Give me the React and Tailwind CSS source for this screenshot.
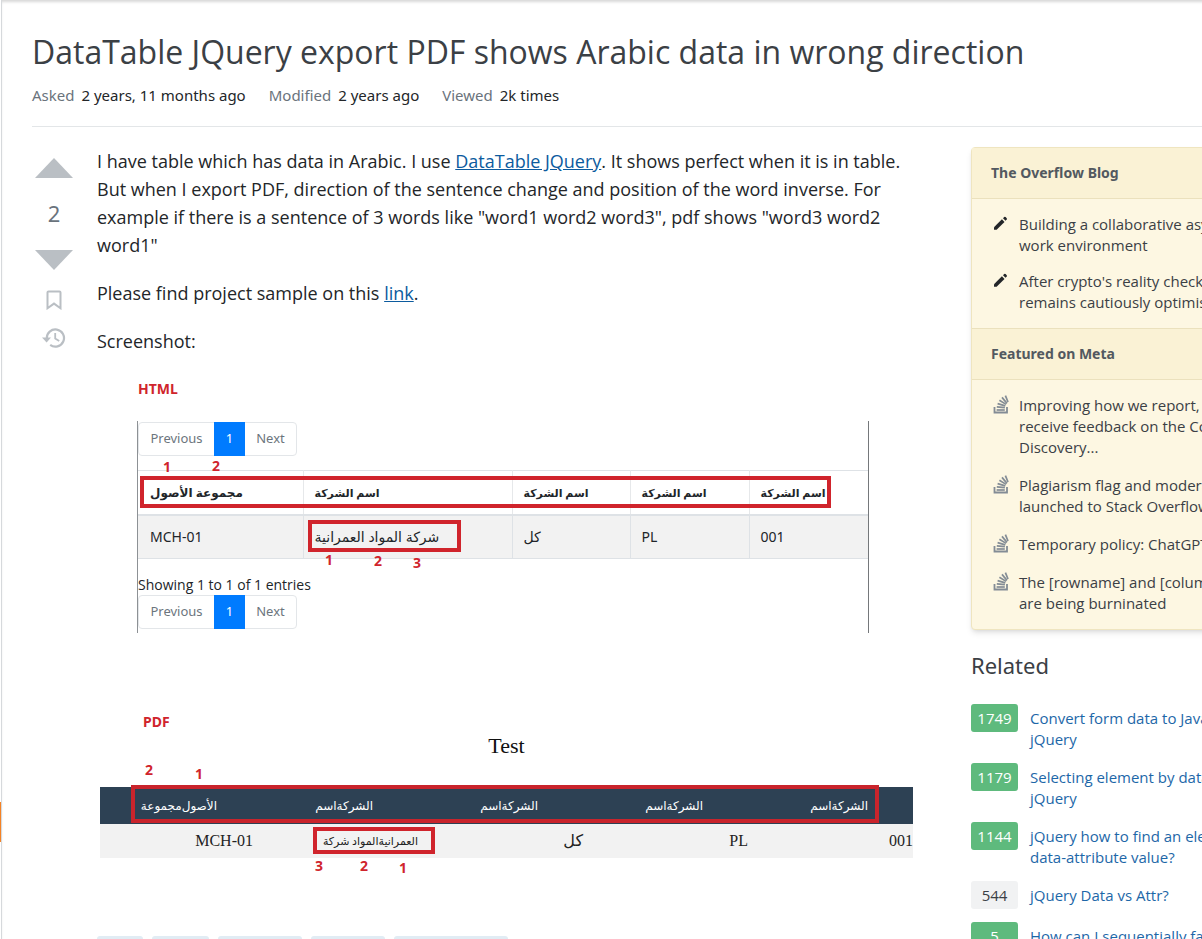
import React from 'react';

const blogPosts = [
  'Building a collaborative asynchronous\nwork environment',
  "After crypto's reality check, an investor\nremains cautiously optimistic"
];

const metaPosts = [
  'Improving how we report, handle and\nreceive feedback on the Collectives\nDiscovery...',
  'Plagiarism flag and moderator tooling has\nlaunched to Stack Overflow!',
  'Temporary policy: ChatGPT is banned',
  'The [rowname] and [columnname] tags\nare being burninated'
];

const related = [
  { score: 1749, title: 'Convert form data to JavaScript object with\njQuery', accepted: true },
  { score: 1179, title: 'Selecting element by data attribute with\njQuery', accepted: true },
  { score: 1144, title: 'jQuery how to find an element based on a\ndata-attribute value?', accepted: true },
  { score: 544, title: 'jQuery Data vs Attr?', accepted: false },
  { score: 5, title: 'How can I sequentially fade in elements', accepted: true }
];

const htmlColumns = [
  { title: 'مجموعة الأصول', value: 'MCH-01', width: 'w-[165px]' },
  { title: 'اسم الشركة', value: 'شركة المواد العمرانية', width: 'w-[209px]' },
  { title: 'اسم الشركة', value: 'كل', width: 'w-[118px]' },
  { title: 'اسم الشركة', value: 'PL', width: 'w-[119px]' },
  { title: 'اسم الشركة', value: '001', width: 'w-[119px]' }
];

const pdfColumns = [
  { title: 'الأصول\u200cمجموعة', value: 'MCH-01', width: 'w-[153px]', size: 'text-[16px]' },
  { title: 'الشركةاسم', value: 'العمرانيةالمواد شركة', width: 'w-[165px]', size: 'text-[11px]' },
  { title: 'الشركةاسم', value: 'كل', width: 'w-[165px]', size: 'text-[16px]' },
  { title: 'الشركةاسم', value: 'PL', width: 'w-[165px]', size: 'text-[16px]' },
  { title: 'الشركةاسم', value: '001', width: 'w-[165px]', size: 'text-[16px]' }
];

const tags = [
  { name: 'html', width: 'w-[46px]' },
  { name: 'jquery', width: 'w-[57px]' },
  { name: 'datatables', width: 'w-[84px]' },
  { name: 'pdfmake', width: 'w-[74px]' },
  { name: 'right-to-left', width: 'w-[114px]' }
];

function PencilIcon() {
  return (
    <svg width="15" height="15" viewBox="0 0 15 15" className="mt-[2px] shrink-0" fill="#232629" aria-hidden="true">
      <path d="M1 11.2 8.9 3.3l2.6 2.6L3.6 13.8H1z" />
      <path d="m10 2.3 1.2-1.2a1 1 0 0 1 1.4 0l1.1 1.1a1 1 0 0 1 0 1.4l-1.2 1.2z" />
    </svg>
  );
}

function StackIcon() {
  return (
    <svg width="17" height="19" viewBox="0 0 17 19" className="-mr-[2px] shrink-0" fill="none" stroke="#838c95" aria-hidden="true">
      <path d="M1.5 12v5.5h12.5V12" strokeWidth="1.8" />
      <g strokeWidth="1.7">
        <path d="M3.6 15h8.2" />
        <path d="m3.8 11.8 8.1.9" />
        <path d="m4.6 8.6 7.7 2.3" />
        <path d="m6.4 5.2 6.7 4.2" />
        <path d="m9 2.4 5 6" />
        <path d="m12.4.6 2.6 6.4" />
      </g>
    </svg>
  );
}

function Votes() {
  return (
    <div className="flex w-[44px] shrink-0 flex-col items-center pt-[11px]">
      <button type="button" aria-label="Up vote">
        <svg width="38" height="20" viewBox="0 0 38 20" fill="#babfc4"><path d="M0 20h38L19 0z" /></svg>
      </button>
      <div className="mt-[19px] mb-[21px] text-[22px] leading-[32px] text-[#6a737c]">2</div>
      <button type="button" aria-label="Down vote">
        <svg width="38" height="20" viewBox="0 0 38 20" fill="#babfc4"><path d="M0 0h38L19 20z" /></svg>
      </button>
      <button type="button" aria-label="Save" className="mt-5">
        <svg width="16" height="20" viewBox="0 0 16 20" fill="none" stroke="#babfc4" strokeWidth="2">
          <path d="M1.5 18.2V2.5a1 1 0 0 1 1-1h11a1 1 0 0 1 1 1v15.7L8 13.6z" />
        </svg>
      </button>
      <a href="#timeline" aria-label="Timeline" className="mt-[18px]">
        <svg width="24" height="20" viewBox="0 0 24 20" fill="none" stroke="#babfc4">
          <path d="M4.8 10.5a8.6 8.6 0 1 1 3.4 6.4" strokeWidth="2.2" />
          <path d="M0 9.6h9l-4.4 5z" fill="#babfc4" stroke="none" />
          <path d="M13.2 5v5.4l4 2.6" strokeWidth="1.8" />
        </svg>
      </a>
    </div>
  );
}

function Pagination() {
  return (
    <div className="flex h-[34px] w-[159px] rounded-[4px] border border-[#e3e6e9] text-[13px] text-[#6c757d]">
      <button type="button" className="w-[75px]">Previous</button>
      <button type="button" className="-my-px w-[31px] bg-[#007bff] text-white">1</button>
      <button type="button" className="flex-1">Next</button>
    </div>
  );
}

// red number written over the figure
function Mark({ children, className }) {
  return (
    <span className={`absolute text-[14px] leading-[16px] font-bold text-[#d0242c] ${className}`}>
      {children}
    </span>
  );
}

function HtmlFigure() {
  return (
    <div className="relative ml-[40px] w-[732px] border-x border-l-[#8d9195] border-r-[#75787b]">
      <div className="pt-px pb-[14px]">
        <Pagination />
      </div>
      <table className="w-full table-fixed border-collapse text-left text-[#212529]">
        <thead>
          <tr className="h-[44px] border-t border-b-2 border-[#dee2e6]">
            {htmlColumns.map((col, i) => (
              <th key={i} className={`${col.width} border-r border-[#e6e8ea] pt-[2px] pl-[11px] text-[11px] font-bold whitespace-nowrap first:pl-[12px] first:text-[12px] last:border-r-0`}>
                {col.title}
              </th>
            ))}
          </tr>
        </thead>
        <tbody>
          <tr className="h-[44px] border-b border-[#dee2e6] bg-[#f2f2f2]">
            {htmlColumns.map((col, i) => (
              <td key={i} className="border-r border-[#dee2e6] pl-[11px] text-[14px] whitespace-nowrap first:pl-[12px] last:border-r-0">
                {col.value}
              </td>
            ))}
          </tr>
        </tbody>
      </table>
      <p className="pt-[16px] font-['Open_Sans',sans-serif] text-[14px] leading-[20px] text-[#212529]">Showing 1 to 1 of 1 entries</p>
      <div className="pb-1">
        <Pagination />
      </div>

      <div className="absolute top-[55px] left-[2px] h-[32px] w-[691px] border-4 border-[#d0242c]" />
      <div className="absolute top-[99px] left-[170px] h-[32px] w-[153px] border-4 border-[#d0242c]" />
      <Mark className="top-[38px] left-[25px]">1</Mark>
      <Mark className="top-[37px] left-[74px]">2</Mark>
      <Mark className="top-[131px] left-[187px]">1</Mark>
      <Mark className="top-[132px] left-[236px]">2</Mark>
      <Mark className="top-[134px] left-[275px]">3</Mark>
    </div>
  );
}

function PdfFigure() {
  return (
    <div className="relative ml-[3px] w-[813px] pb-[78px] font-['Liberation_Serif','DejaVu_Sans',serif]">
      <div className="pb-[27px] text-center text-[22px] leading-[28px] text-[#111]">Test</div>
      <table className="w-full table-fixed border-collapse text-right whitespace-nowrap">
        <thead>
          <tr className="h-[37px] bg-[#2d4154] text-[12px] text-white">
            {pdfColumns.map((col, i) => (
              <th key={i} className={`${col.width} pr-[45px] font-normal first:pr-[36px]`}>
                {col.title}
              </th>
            ))}
          </tr>
        </thead>
        <tbody>
          <tr className="h-[34px] bg-[#f2f2f2] text-[#222]">
            {pdfColumns.map((col, i) => (
              <td key={i} className={col.size}>{col.value}</td>
            ))}
          </tr>
        </tbody>
      </table>

      <div className="absolute top-[53px] left-[31px] h-[38px] w-[748px] border-4 border-[#c9242c]" />
      <div className="absolute top-[95px] left-[213px] h-[27px] w-[122px] border-4 border-[#d0242c]" />
      <div className="font-['Noto_Sans',sans-serif]">
        <Mark className="top-[30px] left-[45px]">2</Mark>
        <Mark className="top-[34px] left-[95px]">1</Mark>
        <Mark className="top-[126px] left-[215px]">3</Mark>
        <Mark className="top-[126px] left-[260px]">2</Mark>
        <Mark className="top-[128px] left-[299px]">1</Mark>
      </div>
    </div>
  );
}

function WidgetHeader({ children }) {
  return (
    <h3 className="h-[51px] border-b border-[#ebe1bd] bg-[#faf2d5] pl-[19px] text-[14px] leading-[49px] font-bold text-[#525960]">
      {children}
    </h3>
  );
}

function WidgetList({ posts, icon, className }) {
  return (
    <ul className={`px-[21px] py-[15px] ${className}`}>
      {posts.map((post) => (
        <li key={post} className="flex gap-[11px]">
          {icon}
          <a href="#post" className="font-['Open_Sans',sans-serif] text-[15px] leading-[21px] whitespace-pre text-[#3b4045]">{post}</a>
        </li>
      ))}
    </ul>
  );
}

function Sidebar() {
  return (
    <aside className="w-[345px] shrink-0 pt-[20px]">
      <div className="rounded-[4px] border border-[#efe5c0] bg-[#fdf7e2] shadow-md">
        <WidgetHeader>The Overflow Blog</WidgetHeader>
        <WidgetList posts={blogPosts} icon={<PencilIcon />} className="space-y-[15px]" />
        <div className="border-t border-[#ebe1bd]">
          <WidgetHeader>Featured on Meta</WidgetHeader>
        </div>
        <WidgetList posts={metaPosts} icon={<StackIcon />} className="space-y-[17px]" />
      </div>

      <h2 className="mt-[20px] mb-[24px] text-[22px] leading-[30px] text-[#3b4045]">Related</h2>
      <ul className="space-y-[13px]">
        {related.map((q) => (
          <li key={q.title} className="flex items-start gap-[12px]">
            <span
              className={`w-[47px] shrink-0 rounded-[3px] text-center font-['Open_Sans',sans-serif] text-[15px] leading-[28px] ${
                q.accepted ? 'bg-[#5eba7d] text-white' : 'bg-[#f1f2f3] text-[#3b4045]'
              }`}
            >
              {q.score}
            </span>
            <a href="#question" className="pt-1 font-['Open_Sans',sans-serif] text-[15px] leading-[21px] whitespace-pre text-[#1d67a8]">{q.title}</a>
          </li>
        ))}
      </ul>
    </aside>
  );
}

export default function App() {
  return (
    <div className="flex h-screen overflow-hidden bg-white font-['Noto_Sans','DejaVu_Sans',sans-serif] text-[#232629]">
      <div className="w-px shrink-0 pt-[802px]">
        <div className="h-[40px] bg-[#f48225]" />
      </div>
      <div className="min-w-[1315px] flex-1 border-l border-[#d6d9dc] pl-[30px] shadow-[inset_0_3px_3px_-1px_#d8d8d8]">
        <h1 className="pt-[29px] font-['Open_Sans',sans-serif] text-[32px] leading-[46px] whitespace-nowrap text-[#3b4045]">
          DataTable JQuery export PDF shows Arabic data in wrong direction
        </h1>
        <div className="flex gap-[23px] border-b border-[#e3e6e8] pt-[10px] pb-[20px] text-[15px] leading-[21px]">
          <div className="flex gap-[7px]"><span className="text-[#6a737c]">Asked</span><span>2 years, 11 months ago</span></div>
          <div className="flex gap-[7px]"><span className="text-[#6a737c]">Modified</span><span>2 years ago</span></div>
          <div className="flex gap-[7px]"><span className="text-[#6a737c]">Viewed</span><span>2k times</span></div>
        </div>

        <div className="flex">
          <main className="flex min-w-0 flex-1 pt-[20px]">
            <Votes />
            <article className="ml-[21px] min-w-0 flex-1 pr-[58px]">
              <div className="space-y-[20px] font-['Open_Sans',sans-serif] text-[18px] leading-[28px]">
                <p>
                  I have table which has data in Arabic. I use{' '}
                  <a href="#datatable" className="text-[#0c5b9e] underline">DataTable JQuery</a>. It shows perfect when it is in table.<br />
                  But when I export PDF, direction of the sentence change and position of the word inverse. For<br />
                  example if there is a sentence of 3 words like "word1 word2 word3", pdf shows "word3 word2<br />
                  word1"
                </p>
                <p>
                  Please find project sample on this <a href="#sample" className="text-[#0c5b9e] underline">link</a>.
                </p>
                <p>Screenshot:</p>
              </div>

              <div className="pt-[24px] pb-[22px] pl-[41px] text-[14px] leading-[20px] font-bold text-[#d0242c]">HTML</div>
              <HtmlFigure />
              <div className="pt-[79px] pl-[46px] text-[14px] leading-[20px] font-bold text-[#d0242c]">PDF</div>
              <PdfFigure />

              <div className="flex gap-[9px]">
                {tags.map((tag) => (
                  <a
                    key={tag.name}
                    href="#tag"
                    className={`${tag.width} shrink-0 rounded-[3px] bg-[#e1ecf4] text-center text-[14px] leading-[26px] text-[#39739d]`}
                  >
                    {tag.name}
                  </a>
                ))}
              </div>
            </article>
          </main>
          <Sidebar />
        </div>
      </div>
    </div>
  );
}
